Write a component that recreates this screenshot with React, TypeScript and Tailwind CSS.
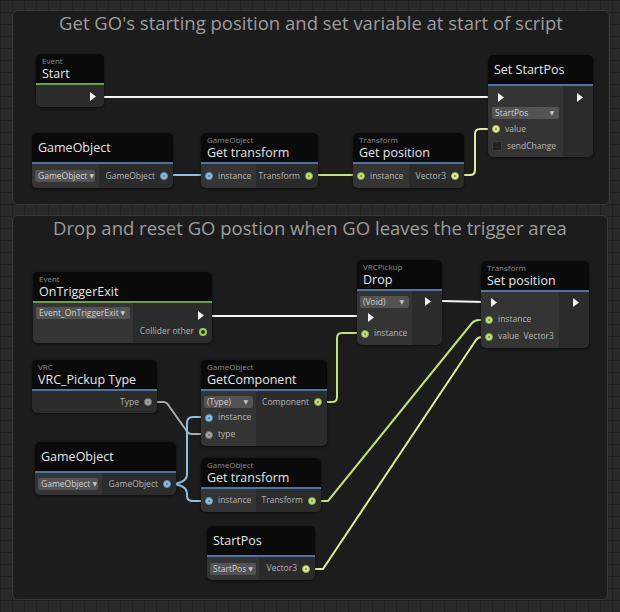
import React from 'react'

type Origin = { ox: number; oy: number }

type NodeProps = Origin & {
  x: number
  y: number
  w: number
  cat?: string
  title: string
  accent?: 'green' | 'blue'
  lw: number
  bodyH: number
  left?: React.ReactNode
  right?: React.ReactNode
}

// node on the graph canvas, coordinates are page coords minus the group origin
const Node = ({ ox, oy, x, y, w, cat, title, accent = 'blue', lw, bodyH, left, right }: NodeProps) => (
  <div
    className="absolute z-10 rounded-[5px] overflow-hidden shadow-[0_1px_3px_rgba(0,0,0,0.6)]"
    style={{ left: x - ox, top: y - oy, width: w }}
  >
    <div className="h-[29px] bg-[#0a0a0a] px-[6px] flex flex-col justify-center">
      {cat && <div className="text-[8px] leading-[10px] text-[#8a8a8a]">{cat}</div>}
      <div className="text-[12.5px] leading-[15px] text-[#e6e6e6] whitespace-nowrap">{title}</div>
    </div>
    <div className={accent === 'green' ? 'h-[2px] bg-[#6a9e48]' : 'h-[2px] bg-[#4e74a0]'} />
    <div className="flex" style={{ height: bodyH }}>
      {lw > 0 && (
        <div className="bg-[#343434] shrink-0 flex flex-col" style={{ width: lw }}>
          {left}
        </div>
      )}
      <div className="flex-1 bg-[#2b2b2b] flex flex-col">{right}</div>
    </div>
  </div>
)

const portColors = {
  blue: 'bg-[#8cbfe6] border-[#5d8db3]',
  green: 'bg-[#c3e07c] border-[#86a64a]',
  yellow: 'bg-[#e4ea9a] border-[#a4aa5a]',
  gray: 'bg-[#a6a6a6] border-[#6e6e6e]',
}

const Port = ({ c, hollow }: { c: keyof typeof portColors; hollow?: boolean }) =>
  hollow ? (
    <span className="inline-block w-[8px] h-[8px] rounded-full border-2 border-[#93d05e] shrink-0" />
  ) : (
    <span className={`relative inline-block w-[8px] h-[8px] rounded-full border shrink-0 ${portColors[c]}`}>
      <span className="absolute left-[2px] top-[2px] w-[2px] h-[2px] rounded-full bg-[#3a3a3a] opacity-60" />
    </span>
  )

const Flow = () => (
  <svg width="6" height="9" viewBox="0 0 6 9" className="shrink-0">
    <polygon points="0,0 6,4.5 0,9" fill="#f2f2f2" />
  </svg>
)

const Dropdown = ({ label, w, wide }: { label: string; w: number; wide?: boolean }) => (
  <div
    className={`h-[12px] bg-[#535353] rounded-[2px] flex items-center pl-[3px] pr-[3px] text-[8.5px] leading-[12px] text-[#d2d2d2] ${wide ? 'justify-between pr-[5px]' : 'gap-[2px]'}`}
    style={{ width: w }}
  >
    <span className="whitespace-nowrap">{label}</span>
    <span className="text-[6px] text-[#c4c4c4]">▼</span>
  </div>
)

const Row = ({ children, end, h = 16 }: { children: React.ReactNode; end?: boolean; h?: number }) => (
  <div
    className={`flex items-center gap-[5px] text-[8.5px] text-[#b4b4b4] whitespace-nowrap ${end ? 'justify-end pr-[5px]' : 'pl-[4px]'}`}
    style={{ height: h }}
  >
    {children}
  </div>
)

const g1: Origin = { ox: 13, oy: 11 }
const g2: Origin = { ox: 13, oy: 216 }

export default function App() {
  return (
    <div className="relative w-[620px] h-[612px] overflow-hidden bg-[#292929] bg-[linear-gradient(#202020_1px,transparent_1px),linear-gradient(90deg,#202020_1px,transparent_1px)] bg-[size:12px_12px] flex flex-col gap-[10px] pt-[10px] pl-[12px] font-['Open_Sans','DejaVu_Sans',sans-serif]">
      {/* group 1 */}
      <div className="relative w-[598px] h-[195px] shrink-0 rounded-[6px] bg-[#1c1c1c] border border-[#3a3a3a]">
        <div className="text-center pt-[0px] text-[18.5px] leading-[23px] text-[#9c9c9c]">
          Get GO's starting position and set variable at start of script
        </div>
        <svg className="absolute left-0 top-0" width="596" height="193" viewBox="13 11 596 193" fill="none">
          <path d="M97 97 L104 97" stroke="#9a9a9a" strokeWidth="2" />
          <path d="M104 97 L490 97" stroke="#f4f4f4" strokeWidth="2.2" />
          <path d="M490 97 L497 97" stroke="#9a9a9a" strokeWidth="2" />
          <path d="M165 175 L209 175" stroke="#8cbfe6" strokeWidth="2" />
          <path d="M313 175 L361 175" stroke="#c3e07c" strokeWidth="2" />
          <path d="M455 175 L470 175 Q475 175 475 170 L475 134 Q475 129 480 129 L497 129" stroke="#e4ea9a" strokeWidth="2" />
        </svg>

        <Node {...g1} x={36} y={54} w={68} cat="Event" title="Start" accent="green" lw={0} bodyH={22}
          right={<Row end h={22}><span className="pr-[3px]"><Flow /></span></Row>} />

        <Node {...g1} x={488} y={55} w={105} title="Set StartPos" lw={75} bodyH={71}
          left={
            <div className="pt-[3px] flex flex-col">
              <Row><span className="pl-[6px]"><Flow /></span></Row>
              <div className="h-[16px] flex items-center pl-[4px]"><Dropdown label="StartPos" w={67} wide /></div>
              <Row><Port c="yellow" /><span>value</span></Row>
              <Row h={18}>
                <span className="w-[10px] h-[10px] bg-[#232323] border border-[#3c3c3c] rounded-[1px]" />
                <span>sendChange</span>
              </Row>
            </div>
          }
          right={<div className="pt-[3px]"><Row end><span className="pr-[5px]"><Flow /></span></Row></div>} />

        <Node {...g1} x={32} y={133} w={141} title="GameObject" lw={67} bodyH={24}
          left={<div className="h-full flex items-center pl-[3px]"><Dropdown label="GameObject" w={60} /></div>}
          right={<Row end h={24}><span>GameObject</span><Port c="blue" /></Row>} />

        <Node {...g1} x={201} y={133} w={117} cat="GameObject" title="Get transform" lw={55} bodyH={24}
          left={<Row h={24}><Port c="blue" /><span>instance</span></Row>}
          right={<Row end h={24}><span>Transform</span><Port c="green" /></Row>} />

        <Node {...g1} x={353} y={133} w={111} cat="Transform" title="Get position" lw={56} bodyH={24}
          left={<Row h={24}><Port c="green" /><span>instance</span></Row>}
          right={<Row end h={24}><span>Vector3</span><Port c="yellow" /></Row>} />
      </div>

      {/* group 2 */}
      <div className="relative w-[596px] h-[385px] shrink-0 rounded-[6px] bg-[#1c1c1c] border border-[#3a3a3a]">
        <div className="text-center pt-[0px] text-[18.5px] leading-[23px] text-[#9c9c9c]">
          Drop and reset GO postion when GO leaves the trigger area
        </div>
        <svg className="absolute left-0 top-0" width="594" height="383" viewBox="13 216 594 383" fill="none">
          <path d="M204 316 L212 316" stroke="#9a9a9a" strokeWidth="2" />
          <path d="M212 316 L360 316" stroke="#f4f4f4" strokeWidth="2.2" />
          <path d="M360 316 L366 316" stroke="#9a9a9a" strokeWidth="2" />
          <path d="M434 301 L442 301" stroke="#9a9a9a" strokeWidth="2" />
          <path d="M442 301 L484 302" stroke="#f4f4f4" strokeWidth="2.2" />
          <path d="M484 302 L490 302" stroke="#9a9a9a" strokeWidth="2" />
          <path d="M150 402 L163 402 Q167 402 169 406 L186 430 Q188 434 192 434 L209 434" stroke="#a8a8a8" strokeWidth="2" />
          <path d="M168 484 Q187 484 187 474 L187 423 Q187 417 193 417 L209 417" stroke="#8cbfe6" strokeWidth="2" />
          <path d="M168 484 Q187 484 187 494 L187 496 Q187 501 193 501 L209 501" stroke="#8cbfe6" strokeWidth="2" />
          <path d="M318 402 L332 402 Q337 402 337 397 L337 338 Q337 333 342 333 L365 333" stroke="#c3e07c" strokeWidth="2" />
          <path d="M313 501 L328 501 L472 323 Q475 320 479 320 L489 320" stroke="#c3e07c" strokeWidth="2" />
          <path d="M306 569 L323 569 L476 340 Q478 337 482 337 L489 337" stroke="#e4ea9a" strokeWidth="2" />
        </svg>

        <Node {...g2} x={33} y={272} w={179} cat="Event" title="OnTriggerExit" accent="green" lw={100} bodyH={40}
          left={<div className="pt-[4px] pl-[3px]"><Dropdown label="Event_OnTriggerExit" w={94} wide /></div>}
          right={
            <div className="pt-[4px]">
              <Row end><span className="pr-[3px]"><Flow /></span></Row>
              <Row end h={17}><span>Collider other</span><Port c="green" hollow /></Row>
            </div>
          } />

        <Node {...g2} x={357} y={260} w={85} cat="VRCPickup" title="Drop" lw={55} bodyH={54}
          left={
            <div className="pt-[3px]">
              <div className="h-[15px] flex items-center pl-[3px]"><Dropdown label="(Void)" w={49} wide /></div>
              <Row><span className="pl-[7px]"><Flow /></span></Row>
              <Row h={17}><Port c="green" /><span>instance</span></Row>
            </div>
          }
          right={<div className="pt-[3px]"><Row end h={15}><span className="pr-[6px]"><Flow /></span></Row></div>} />

        <Node {...g2} x={481} y={261} w={108} cat="Transform" title="Set position" lw={78} bodyH={56}
          left={
            <div className="pt-[2px]">
              <Row h={17}><span className="pl-[6px]"><Flow /></span></Row>
              <Row h={17}><Port c="green" /><span>instance</span></Row>
              <Row h={17}><Port c="green" /><span>value&nbsp; Vector3</span></Row>
            </div>
          }
          right={<div className="pt-[2px]"><Row end h={17}><span className="pr-[5px]"><Flow /></span></Row></div>} />

        <Node {...g2} x={32} y={360} w={125} cat="VRC" title="VRC_Pickup Type" lw={0} bodyH={22}
          right={<Row end h={22}><span>Type</span><Port c="gray" /></Row>} />

        <Node {...g2} x={201} y={360} w={126} cat="GameObject" title="GetComponent" lw={55} bodyH={55}
          left={
            <div className="pt-[3px]">
              <div className="h-[15px] flex items-center pl-[3px]"><Dropdown label="(Type)" w={49} wide /></div>
              <Row h={17}><Port c="blue" /><span>instance</span></Row>
              <Row h={17}><Port c="gray" /><span>type</span></Row>
            </div>
          }
          right={<div className="pt-[3px]"><Row end h={16}><span>Component</span><Port c="green" /></Row></div>} />

        <Node {...g2} x={35} y={442} w={141} title="GameObject" lw={67} bodyH={22}
          left={<div className="h-full flex items-center pl-[3px]"><Dropdown label="GameObject" w={60} /></div>}
          right={<Row end h={22}><span>GameObject</span><Port c="blue" /></Row>} />

        <Node {...g2} x={201} y={458} w={120} cat="GameObject" title="Get transform" lw={55} bodyH={23}
          left={<Row h={23}><Port c="blue" /><span>instance</span></Row>}
          right={<Row end h={23}><span>Transform</span><Port c="green" /></Row>} />

        <Node {...g2} x={207} y={526} w={108} title="StartPos" lw={52} bodyH={23}
          left={<div className="h-full flex items-center pl-[3px]"><Dropdown label="StartPos" w={46} /></div>}
          right={<Row end h={23}><span>Vector3</span><Port c="yellow" /></Row>} />
      </div>
    </div>
  )
}
